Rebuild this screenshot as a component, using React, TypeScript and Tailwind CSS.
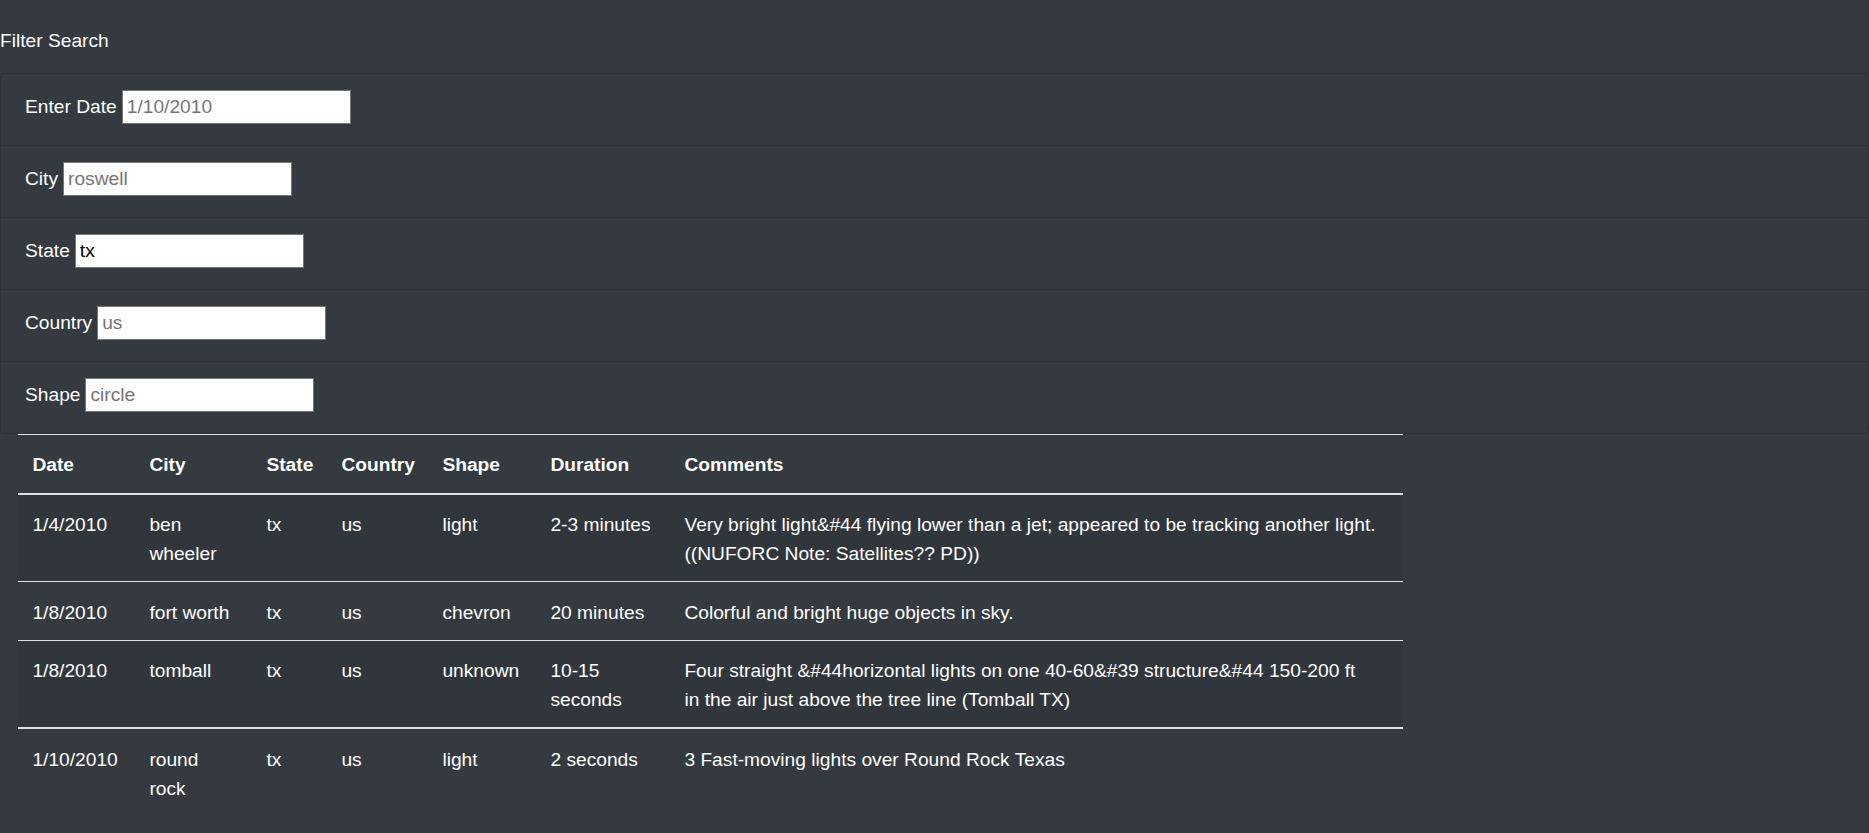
import React from "react"

const filters = [
  { label: "Enter Date", placeholder: "1/10/2010", value: "" },
  { label: "City", placeholder: "roswell", value: "" },
  { label: "State", placeholder: "", value: "tx" },
  { label: "Country", placeholder: "us", value: "" },
  { label: "Shape", placeholder: "circle", value: "" },
]

const columns = [
  { name: "Date", width: 117 },
  { name: "City", width: 117 },
  { name: "State", width: 75 },
  { name: "Country", width: 101 },
  { name: "Shape", width: 108 },
  { name: "Duration", width: 134 },
  { name: "Comments", width: 733 },
]

type Sighting = {
  date: string
  city: string[]
  state: string
  country: string
  shape: string
  duration: string[]
  comments: string[]
}

const firstGroup: Sighting[] = [
  {
    date: "1/4/2010",
    city: ["ben", "wheeler"],
    state: "tx",
    country: "us",
    shape: "light",
    duration: ["2-3 minutes"],
    comments: [
      "Very bright light&#44 flying lower than a jet; appeared to be tracking another light.",
      "((NUFORC Note: Satellites?? PD))",
    ],
  },
  {
    date: "1/8/2010",
    city: ["fort worth"],
    state: "tx",
    country: "us",
    shape: "chevron",
    duration: ["20 minutes"],
    comments: ["Colorful and bright huge objects in sky."],
  },
  {
    date: "1/8/2010",
    city: ["tomball"],
    state: "tx",
    country: "us",
    shape: "unknown",
    duration: ["10-15", "seconds"],
    comments: [
      "Four straight &#44horizontal lights on one 40-60&#39 structure&#44 150-200 ft",
      "in the air just above the tree line (Tomball TX)",
    ],
  },
]

const secondGroup: Sighting[] = [
  {
    date: "1/10/2010",
    city: ["round", "rock"],
    state: "tx",
    country: "us",
    shape: "light",
    duration: ["2 seconds"],
    comments: ["3 Fast-moving lights over Round Rock Texas"],
  },
]

function Lines({ lines }: { lines: string[] }) {
  return (
    <>
      {lines.map((l, i) => (
        <div key={i} className="whitespace-nowrap">
          {l}
        </div>
      ))}
    </>
  )
}

function Row({ s, striped }: { s: Sighting; striped: boolean }) {
  const td = "px-[14.4px] pt-[16.8px] pb-[12px] align-top border-t border-[#dee2e6]"
  return (
    <tr className={striped ? "bg-[#31363c]" : ""}>
      <td className={td}>{s.date}</td>
      <td className={td}>
        <Lines lines={s.city} />
      </td>
      <td className={td}>{s.state}</td>
      <td className={td}>{s.country}</td>
      <td className={td}>{s.shape}</td>
      <td className={td}>
        <Lines lines={s.duration} />
      </td>
      <td className={td}>
        <Lines lines={s.comments} />
      </td>
    </tr>
  )
}

export default function App() {
  return (
    <div className="min-h-screen bg-[#343a40] text-white font-['Liberation_Sans',Arial,sans-serif] text-[19.2px] leading-[28.8px]">
      {/* Filter panel */}
      <div className="pt-[27px] h-[54px] leading-[28px]">Filter Search</div>
      <ul className="mt-[19px] border border-[#2c3136] rounded-[5px]">
        {filters.map((f, i) => (
          <li
            key={f.label}
            className={`flex items-center px-[24px] pb-[6px] ${
              i === 0 ? "h-[71px]" : "h-[72px] border-t border-[#2c3136]"
            }`}
          >
            <div className="flex items-baseline gap-[5px]">
              <span>{f.label}</span>
              <input
                type="text"
                defaultValue={f.value}
                placeholder={f.placeholder}
                className="h-[34px] w-[229px] border border-[#767676] bg-white px-[4px] text-[19.2px] text-black placeholder:text-[#757575] outline-none"
              />
            </div>
          </li>
        ))}
      </ul>

      {/* Results table */}
      <table className="ml-[18px] w-[1385px] table-fixed border-collapse">
        <colgroup>
          {columns.map((c) => (
            <col key={c.name} style={{ width: c.width }} />
          ))}
        </colgroup>
        <thead>
          <tr>
            {columns.map((c) => (
              <th
                key={c.name}
                className="px-[14.4px] pt-[15.6px] pb-[13.2px] text-left font-bold border-t border-b-2 border-[#dee2e6]"
              >
                {c.name}
              </th>
            ))}
          </tr>
        </thead>
        <tbody>
          {firstGroup.map((s, i) => (
            <Row key={i} s={s} striped={i % 2 === 0} />
          ))}
        </tbody>
        <tbody className="border-t-2 border-[#dee2e6]">
          {secondGroup.map((s, i) => (
            <Row key={i} s={s} striped={false} />
          ))}
        </tbody>
      </table>
    </div>
  )
}
